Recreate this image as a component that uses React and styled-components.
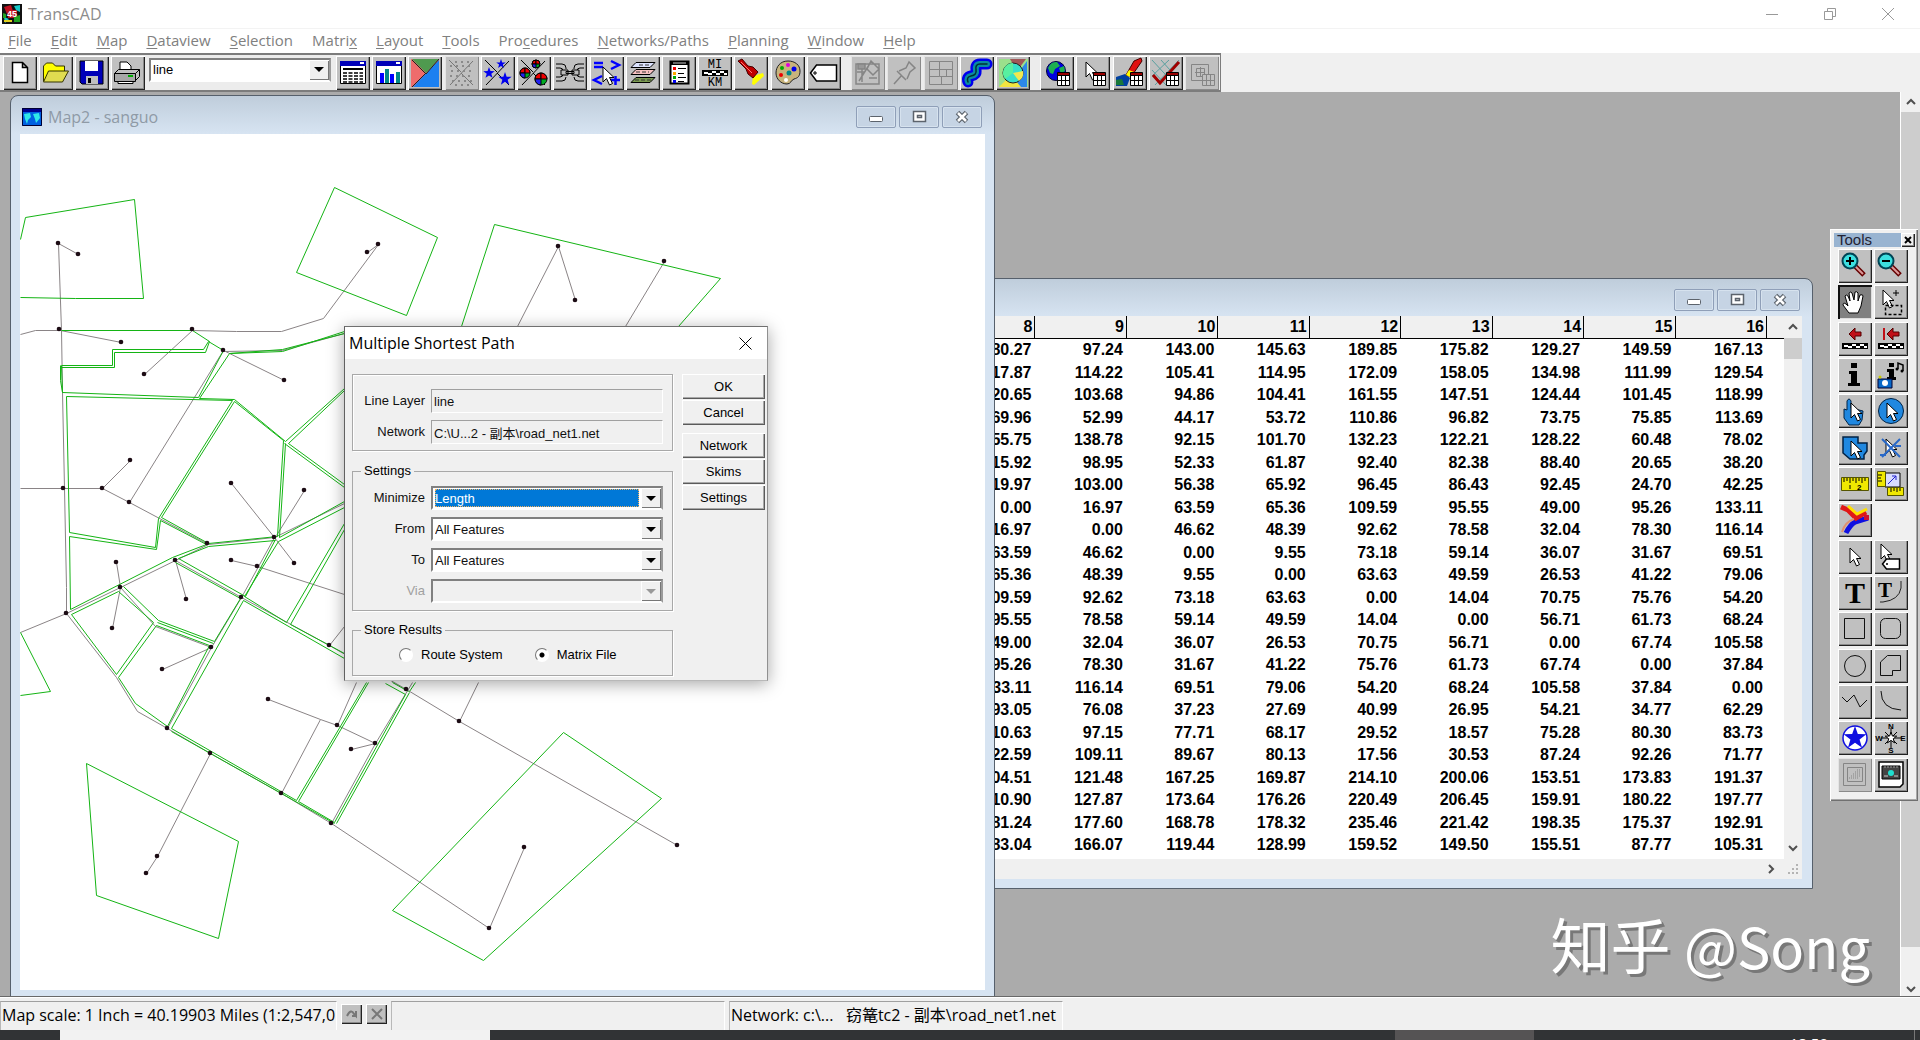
import React from "react";
import styled, { createGlobalStyle, css } from "styled-components";

const UI = '"Open Sans", "Noto Sans CJK SC", sans-serif';
const CLASSIC = '"Liberation Sans", "Noto Sans CJK SC", sans-serif';

const GlobalStyle = createGlobalStyle`
  * { box-sizing: border-box; }
  body { margin: 0; overflow: hidden; font-family: ${UI}; color: #000; }
  button, input, select { font: inherit; color: inherit; margin: 0; border-radius: 0; }
`;

/* ---------- icons, drawn on the 34px face of a tool button ---------- */

const MiniTable = ({ off }) => (
  <g stroke={off ? "#858585" : "#000"} fill={off ? "#c0c0c0" : "#fff"}>
    <path d="M17.5 18.5h12v11h-12z" />
    {!off && <path d="M17.5 16.5h12v3h-12z" fill="#900" />}
    <path d="M17.5 24.5h12M21.5 19v10M25.5 19v10" />
  </g>
);
const Cursor = ({ x = 0, y = 0 }) => (
  <path transform={`translate(${x} ${y})`} d="M0 0v15l3.500-3.500 3 6.500 3-1.500-3-6h4.500z" fill="#fff" stroke="#000" />
);
const star = (cx, cy, r) =>
  Array.from({ length: 10 }, (_, i) => {
    const a = (Math.PI * i) / 5 - Math.PI / 2;
    const k = i % 2 ? r * 0.4 : r;
    return `${cx + k * Math.cos(a)},${cy + k * Math.sin(a)}`;
  }).join(" ");
const Pie = ({ x, y, r }) => (
  <g stroke="#000">
    <circle cx={x} cy={y} r={r} fill="#0a2" />
    <path d={`M${x} ${y}V${y - r}A${r} ${r} 0 0 0 ${x - r} ${y}z`} fill="#e00" />
    <path d={`M${x} ${y}H${x - r}A${r} ${r} 0 0 0 ${x} ${y + r}z`} fill="#22e" />
    <path d={`M${x} ${y}H${x + r}A${r} ${r} 0 0 0 ${x} ${y - r}z`} fill="#e00" />
  </g>
);
const Diagonals = ({ c = "#000" }) => <path d="M4 4l12 12M28 5L5 29M16 17l12 12" stroke={c} fill="none" />;
const Scale = ({ y }) => (
  <g>
    <path d={`M4 ${y}h26v6H4z`} fill="#000" />
    <path d={`M6 ${y + 2}h4v2H6zM14 ${y + 1}h4v2h-4zM10 ${y + 3}h4v2h-4zM22 ${y + 1}h4v2h-4zM18 ${y + 3}h4v2h-4zM26 ${y + 3}h3v2h-3z`} fill="#fff" />
  </g>
);
const Lens = ({ plus }) => (
  <g>
    <path d="M17 17l9 9" stroke="#600" strokeWidth="5" />
    <path d="M17 17l8 8" stroke="#d99" strokeWidth="2" />
    <circle cx="12" cy="12" r="7.500" fill="#3de0e0" stroke="#045" strokeWidth="2" />
    <path d={plus ? "M8 12h8M12 8v8" : "M8 12h8"} stroke="#000" strokeWidth="2" />
  </g>
);

const icons = {
  newFile: <path d="M9.500 6.500h10l5 5v15h-15zM19.500 6.500v5h5" fill="#fff" stroke="#000" strokeWidth="1.500" />,
  open: (
    <g stroke="#330">
      <path d="M4.500 25V10l3-3h6l3 3h9v6" fill="#ff0" />
      <path d="M4.500 26l5-11h20l-6 11z" fill="#e0dc50" />
    </g>
  ),
  save: (
    <g>
      <path d="M5 5h23v23H7l-2-2z" fill="#0000b8" stroke="#000" />
      <path d="M10 5h13v10H10z" fill="#fff" />
      <path d="M11 20h12v8H11z" fill="#c0c0c0" />
      <path d="M13 22h3v5h-3z" fill="#000" />
    </g>
  ),
  print: (
    <g stroke="#000">
      <path d="M9 14V6h7l4 4v5" fill="#fff" />
      <path d="M3.500 17.500l4-4h21v7l-4 4h-21z" fill="#c0c0c0" />
      <path d="M3.500 17.500h21v8h-21zM24.500 17.500l4-4" fill="#a8a8a8" />
      <path d="M7 25.500h15v2H7z" fill="#fff" />
      <path d="M17 20h5" stroke="#0a0" strokeWidth="2" />
    </g>
  ),
  table: (
    <g>
      <path d="M4.500 5.500h25v22h-25z" fill="#fff" stroke="#000" />
      <path d="M4 5h26v5H4z" fill="#0000b8" />
      <path d="M24 7h4" stroke="#fff" strokeWidth="2" />
      <path d="M7 13h20" stroke="#000" strokeWidth="2" />
      <path d="M7 17h20M7 20h20M7 23h20M7 26h20" stroke="#000" strokeWidth="1.500" strokeDasharray="4 1.500" />
    </g>
  ),
  chart: (
    <g>
      <path d="M4.500 5.500h25v22h-25z" fill="#fff" stroke="#000" />
      <path d="M4 5h26v5H4z" fill="#0000b8" />
      <path d="M24 7h4" stroke="#fff" strokeWidth="2" />
      <path d="M8 17h4v10H8zM18 18h4v9h-4z" fill="#00f" />
      <path d="M13 13h4v14h-4zM24 16h4v11h-4z" fill="#088" />
    </g>
  ),
  theme: (
    <g>
      <path d="M3 3h28v28H3z" fill="#ee6c6c" />
      <path d="M4 3h27L18 17z" fill="#4f9a4f" />
      <path d="M31 4v27H5z" fill="#1c80f0" />
      <path d="M4 4l14 14L31 3M18 17L4 31" stroke="#222" fill="none" />
    </g>
  ),
  dots: (
    <g>
      <Diagonals c="#777" />
      <path d="M5 10h24M6 15h24M5 20h24M7 25h22M10 6h14M10 29h14" stroke="#8a8a8a" strokeWidth="2" strokeDasharray="2 4" />
    </g>
  ),
  stars: (
    <g>
      <Diagonals />
      <g fill="#00e">
        <polygon points={star(20, 8, 5)} />
        <polygon points={star(8, 17, 6)} />
        <polygon points={star(24, 23, 7)} />
      </g>
    </g>
  ),
  pies: (
    <g>
      <Diagonals />
      <Pie x={19} y={8} r={4} />
      <Pie x={8} y={17} r={5} />
      <Pie x={24} y={23} r={6} />
    </g>
  ),
  chain: (
    <g fill="none" stroke="#000">
      <path d="M3 8h6q4 0 4 4v1M3 12h4q3 0 3 3M3 25h6q4 0 4-4M3 21h4q3 0 3-3" />
      <path d="M31 8h-6q-4 0-4 4v1M31 12h-4q-3 0-3 3M31 25h-6q-4 0-4-4M31 21h-4q-3 0-3-3" />
      <path d="M8 14h7v5H8zM19 14h7v5h-7zM13 15.500h8v2h-8z" fill="#bbb" />
    </g>
  ),
  query: (
    <g>
      <path d="M4 7h9M4 11h9M21 5l8 4-8 4M12 20l-8 4 8 4M21 24h9M25.500 20v9" stroke="#00f" strokeWidth="2.500" fill="none" />
      <Cursor x={13} y={11} />
    </g>
  ),
  layers: (
    <g stroke="#000">
      <path d="M10 6.500h19l-5 5H5z" fill="#dde4ff" />
      <path d="M10 13.500h19l-5 5H5z" fill="#f7c0c0" />
      <path d="M10 21.500h19l-5 5H5z" fill="#7a9a50" />
      <path d="M13 9h11M10 16h13M9 24h16" stroke="#333" strokeDasharray="4 2" />
    </g>
  ),
  legend: (
    <g>
      <path d="M8.500 5.500h18v22h-18z" fill="#fff" stroke="#000" strokeWidth="2" />
      <path d="M8 5h19v4H8z" fill="#000" />
      <path d="M11 7h13" stroke="#ccc" />
      <path d="M11 11h3v3h-3z" fill="#e00" />
      <path d="M11 16h3v3h-3z" fill="#fa0" />
      <path d="M11 20h3v3h-3z" fill="#0a0" />
      <path d="M11 24h3v3h-3z" fill="#00e" />
      <path d="M16 12.500h8M16 17.500h6M16 21.500h8M16 25.500h6" stroke="#000" />
    </g>
  ),
  units: (
    <g>
      <Scale y={14} />
      <g fontFamily="Liberation Mono, monospace" fontSize="12" textAnchor="middle">
        <text x="17" y="12">MI</text>
        <text x="17" y="30">KM</text>
      </g>
    </g>
  ),
  flashlight: (
    <g>
      <path d="M19 20l10-3 1 3-10 9-2-1z" fill="#ff0" />
      <path d="M4 5l4-2 6 7 5 1 5 5-5 6-5-4-2-5z" fill="#c00000" stroke="#400" />
      <path d="M7 6l11 11" stroke="#f77" />
    </g>
  ),
  palette: (
    <g>
      <path d="M17 5C9 5 5 11 5 17s5 11 11 11c4 0 4-4 7-5 4-1 6-3 6-8 0-6-5-10-12-10z" fill="#c8b47c" stroke="#222" />
      <circle cx="11" cy="12" r="2" fill="#0a0" />
      <circle cx="17" cy="9" r="2" fill="#d0d" />
      <circle cx="23" cy="13" r="2.500" fill="#00e" />
      <circle cx="10" cy="19" r="2" fill="#e00" />
      <circle cx="18" cy="17" r="2.500" fill="#088" />
      <circle cx="15" cy="24" r="2" fill="#fff" />
    </g>
  ),
  tag: (
    <g stroke="#000">
      <path d="M3.500 17l6-8h20v16h-20z" fill="#fff" strokeWidth="1.500" />
      <path d="M6 17h4M8 15v4" />
    </g>
  ),
  pinMap: (
    <g fill="none" stroke="#858585" strokeWidth="1.500">
      <path d="M5 8h23v20H5zM8 25l10-16M20 5l8 8-6 6-6-6zM6 16h8M18 22h8M11 12v14" />
      <path d="M7 8h7v5H7z" fill="#999" />
    </g>
  ),
  pin: <path d="M7 28l8-9M10 15l9 9M12 15l7-3 3-6 6 6-5 4-3 7" fill="none" stroke="#858585" strokeWidth="1.500" />,
  grid: <path d="M5.500 5.500h23v23h-23zM5.500 13.500h10M15.500 5.500v15h-10M15.500 13.500h13M22.500 13.500v7M15.500 20.500h13M17.500 20.500v8" fill="none" stroke="#858585" />,
  river: (
    <g fill="none" strokeLinejoin="round" strokeLinecap="round">
      <path d="M27 8h-7q-5 0-4 6 1 5-5 6-5 1-3 6" stroke="#0000ee" strokeWidth="11" />
      <path d="M27 8h-7q-5 0-4 6 1 5-5 6-5 1-3 6" stroke="#0a8ca0" strokeWidth="6" />
      <path d="M27 8h-7q-5 0-4 6 1 5-5 6-5 1-3 6" stroke="#033" strokeWidth="1.500" />
    </g>
  ),
  pieMap: (
    <g>
      <path d="M3 3h29v28H3z" fill="#9be08c" />
      <path d="M14 3h16l-9 12z" fill="#a05858" />
      <path d="M31 5v26H12z" fill="#2c88e8" />
      <path d="M3 31l12-12 10 12z" fill="#f2e640" />
      <circle cx="17" cy="17" r="10" fill="#38e0c8" stroke="#222" />
      <path d="M17 17V7a10 10 0 0 0-8 16z" fill="#58f0a0" />
      <path d="M17 17l6 8a10 10 0 0 0 4-10z" fill="#f0e850" />
    </g>
  ),
  globeTable: (
    <g>
      <circle cx="16" cy="15" r="9.500" fill="#0000e0" stroke="#003" />
      <path d="M8 12q3-7 9-6l3 4-5 3-2 5-3-1zM19 12l5-2 1 5-4 3z" fill="#1cb050" />
      <MiniTable />
    </g>
  ),
  cursorTable: (
    <g>
      <Cursor x={10} y={6} />
      <MiniTable />
    </g>
  ),
  brushTable: (
    <g>
      <path d="M3 21l9-3 5 4-3 8H3z" fill="#0040a0" />
      <path d="M3 24l6-1 2 6H3z" fill="#187838" />
      <path d="M13 19l8-14 7-3 1 3-11 16z" fill="#e01010" stroke="#400" />
      <path d="M16 14l5 2-4 5-4-2z" fill="#ff0" />
      <MiniTable />
    </g>
  ),
  checkTable: (
    <g>
      <path d="M3 4l24 26M12 4l18 20M3 14l14 15M30 4L6 29M20 4L3 20" stroke="#5aa0a0" fill="none" />
      <path d="M4 19l7 8L30 6" stroke="#a00000" strokeWidth="3" fill="none" />
      <MiniTable />
    </g>
  ),
  offTable: (
    <g>
      <path d="M6.500 8.500h17v16h-17zM10 16.500h10M15.500 11v10M11.500 12.500h8v8h-8z" fill="none" stroke="#858585" />
      <MiniTable off />
    </g>
  ),
  zoomIn: <Lens plus />,
  zoomOut: <Lens />,
  hand: <path d="M11 28l-6-8q0-3 3-1l2 2-3-10q1-2 3 0l2 5-1-8q2-2 3 0l2 7 1-8q2-1 3 1v8l2-6q3-1 3 1l-2 10-3 7z" fill="#fff" stroke="#000" />,
  selectBox: (
    <g>
      <Cursor x={9} y={5} />
      <path d="M11.500 20.500h16v9h-16z" fill="none" stroke="#000" strokeWidth="1.500" strokeDasharray="3 2" />
      <path d="M19 8h6M22 5v6" stroke="#000" />
    </g>
  ),
  back: (
    <g>
      <path d="M11 12l6-6v4h6v4h-6v4z" fill="#c01018" stroke="#500" />
      <Scale y={21} />
    </g>
  ),
  backEnd: (
    <g>
      <path d="M13 12l6-6v4h6v4h-6v4z" fill="#c01018" stroke="#500" />
      <path d="M10 6v12" stroke="#c01018" strokeWidth="2" />
      <Scale y={21} />
    </g>
  ),
  info: <path d="M13 5h6v5h-6zM11 13h8v12h3v3H10v-3h3v-9h-2z" fill="#000" />,
  infoMedia: (
    <g>
      <path d="M15 5h5v4h-5zM13 11h7v8h2v3h-9v-3h2v-5h-2z" fill="#000" />
      <path d="M24 11V5l5 2v6" stroke="#000" fill="none" strokeWidth="1.500" />
      <circle cx="23" cy="11" r="1.500" /><circle cx="28" cy="13" r="1.500" />
      <path d="M4 21h14v9H4z" fill="#0868c8" stroke="#003" />
      <circle cx="11" cy="25" r="3" fill="#fff" /><circle cx="6" cy="19" r="1.500" fill="#cc0" />
    </g>
  ),
  pointSel: (
    <g>
      <path d="M9 7q2-4 4 0v7l8 2 4 1-1 9-3 5H11l-5-7V15l3 1z" fill="#2088e0" stroke="#024" />
      <Cursor x={13} y={9} />
    </g>
  ),
  circleSel: (
    <g>
      <circle cx="17" cy="17" r="12.500" fill="#2088e0" stroke="#024" />
      <Cursor x={13} y={9} />
    </g>
  ),
  polySel: (
    <g>
      <path d="M5 6h15v6h9v8l-3 4v4H12l-7-6z" fill="#2088e0" stroke="#024" strokeWidth="1.500" />
      <Cursor x={13} y={10} />
    </g>
  ),
  clearSel: (
    <g>
      <Cursor x={12} y={8} />
      <path d="M8 8l18 18M26 8L8 26M6 24h6M21 15h6" stroke="#2868c8" strokeWidth="2" />
    </g>
  ),
  ruler: (
    <g>
      <path d="M3.500 10.500h27v13h-27z" fill="#f0e800" stroke="#550" />
      <path d="M6 11v4M9 11v3M12 11v5M15 11v3M18 11v5M21 11v3M24 11v5M27 11v3M12 18v4" stroke="#000" />
      <text x="19" y="23" fontFamily="Liberation Sans, sans-serif" fontSize="8" fontWeight="700">2</text>
    </g>
  ),
  rulers: (
    <g>
      <path d="M11 6h15v14H11z" fill="#d8dcff" stroke="#000" />
      <path d="M14 17l8-8m0 4V9h-4" stroke="#22c" fill="none" />
      <path d="M3.500 4.500h8v15h-8zM13.500 20.500h16v8h-16z" fill="#f0e800" stroke="#550" />
      <path d="M4 8h4M4 11h3M4 14h4M17 21v4M20 21v3M23 21v4M26 21v3" stroke="#000" />
    </g>
  ),
  route: (
    <g fill="none">
      <path d="M8 30q4-8 9-11l13-4" stroke="#1010e0" strokeWidth="5" />
      <path d="M3 4l7 3 8 8 10-6" stroke="#e01818" strokeWidth="5" />
      <path d="M10 3l9 8 10-5" stroke="#ffe000" strokeWidth="3" />
      <path d="M4 29q3-10 12-13" stroke="#e09070" strokeWidth="2" />
      <path d="M26 12h5v5h-5z" fill="#d01030" />
    </g>
  ),
  pointer: <Cursor x={12} y={8} />,
  tagPointer: (
    <g>
      <Cursor x={7} y={4} />
      <path d="M8.500 24l4-5h13v10h-13z" fill="#fff" stroke="#000" strokeWidth="1.500" />
      <circle cx="13" cy="24" r="1" />
    </g>
  ),
  text: <text x="17" y="27" textAnchor="middle" fontFamily="Liberation Serif, serif" fontWeight="700" fontSize="30">T</text>,
  curveText: (
    <g>
      <text x="11" y="21" textAnchor="middle" fontFamily="Liberation Serif, serif" fontWeight="700" fontSize="21">T</text>
      <path d="M27 5v7Q25 24 9 26H6" fill="none" stroke="#222" />
    </g>
  ),
  rect: <path d="M6.500 6.500h20v20h-20z" fill="none" stroke="#111" />,
  roundRect: <rect x="6.500" y="6.500" width="20" height="20" rx="5" fill="none" stroke="#111" />,
  circle: <circle cx="17" cy="17" r="10.500" fill="none" stroke="#111" />,
  polygon: <path d="M6.500 13l7-6.500h13v15h-8v5h-12z" fill="none" stroke="#111" />,
  zigzag: <path d="M4 12l5 5 7-7 6 12 7-7" fill="none" stroke="#111" />,
  arc: <path d="M7 6q0 18 20 19" fill="none" stroke="#111" />,
  badge: (
    <g>
      <circle cx="17" cy="17" r="12" fill="#fff" stroke="#1010e0" strokeWidth="1.500" />
      <polygon points={star(17, 17, 12)} fill="#1010e0" />
    </g>
  ),
  compass: (
    <g>
      <path d="M17 7v20M7 17h20M11 11l12 12M23 11L11 23" stroke="#000" />
      <polygon points={star(17, 17, 6)} fill="#fff" stroke="#000" />
      <g fontFamily="Liberation Sans, sans-serif" fontSize="8" fontWeight="700" textAnchor="middle">
        <text x="17" y="8">N</text><text x="17" y="32">S</text><text x="5" y="20">W</text><text x="29" y="20">E</text>
      </g>
    </g>
  ),
  frame: (
    <g fill="none" stroke="#858585">
      <path d="M5.500 5.500h22v22h-22zM9.500 9.500h15v14h-15z" />
      <path d="M11 20h10M13 18h10M15 16h8M17 14h6M19 12h4" strokeDasharray="1 1" />
    </g>
  ),
  layout: (
    <g>
      <path d="M5 4h24v22l-3 3H5z" fill="#fff" stroke="#000" strokeWidth="1.500" />
      <path d="M8 8h18v13H8z" fill="#444" stroke="#000" />
      <path d="M10 9h14" stroke="#999" strokeDasharray="2 1" />
      <circle cx="17" cy="15" r="3" fill="#20e0d0" />
      <path d="M10 18h4M20 18h4" stroke="#ccc" />
    </g>
  ),
};

const Glyph = ({ name }) => (
  <svg width="34" height="34" viewBox="0 0 34 34" fill="#000" aria-hidden="true">{icons[name]}</svg>
);

/* ---------- application frame ---------- */

const Screen = styled.div`
  height: 100vh;
  display: flex;
  flex-direction: column;
  background: #f0f0f0;
`;
const TitleBar = styled.header`
  flex: 0 0 29px;
  display: flex;
  align-items: center;
  gap: 6px;
  padding: 0 6px 0 2px;
  background: #fff;
  border-bottom: 1px solid #f3f3f3;
  color: #8c8c8c;
  font-size: 16px;
`;
const Grow = styled.span`flex: 1;`;
const CaptionButton = styled.button`
  width: 52px;
  height: 28px;
  display: grid;
  place-items: center;
  border: 0;
  background: none;
`;
const MenuBar = styled.nav`
  flex: 0 0 24px;
  display: flex;
  gap: 19px;
  padding-left: 8px;
  background: #fff;
  font-size: 15px;
  line-height: 23px;
`;
const MenuLink = styled.a`
  color: #808080;
  text-decoration: none;
  u { text-underline-offset: 2px; }
`;
const ToolBar = styled.div`
  flex: 0 0 39px;
  align-self: flex-start;
  display: flex;
  align-items: center;
  gap: 10px;
  padding: 0 1px 0 3px;
  border: solid #7c7c7c;
  border-width: 2px 1px 2px 0;
  background: #ececec;
`;
const ToolGroup = styled.div`
  display: flex;
  justify-content: space-between;
  width: ${(p) => p.$w}px;
`;
const raised = css`box-shadow: inset 1px 1px #fff, inset -1px -1px #222, inset -2px -2px #8a8a8a;`;
const ToolButton = styled.button`
  width: 34px;
  height: 34px;
  padding: 0;
  border: 0;
  display: block;
  background: ${(p) => (p.$pressed ? "#808080" : "#c0c0c0")};
  ${(p) => (p.$pressed ? css`box-shadow: inset 2px 2px #111, inset -1px -1px #ddd;` : raised)}
  ${(p) => p.disabled && css`box-shadow: inset 1px 1px #e4e4e4, inset -1px -1px #8a8a8a;`}
  svg { display: block; }
`;
const ComboWrap = styled.div`
  margin: -6px -5px 0 -6px;
`;
const Desktop = styled.main`
  position: relative;
  flex: 1;
  min-height: 0;
  display: flex;
  justify-content: flex-end;
  background: #ababab;
  border-bottom: 1px solid #696969;
  overflow: hidden;
`;

/* ---------- combos ---------- */

const ComboBox = styled.div`
  position: relative;
  display: flex;
  width: ${(p) => p.$w || "100%"};
  height: 24px;
  border: 2px solid;
  border-color: #808080 #9a9a9a #fff #808080;
  background: ${(p) => (p.$off ? "#f0f0f0" : "#fff")};
  font: 13px ${CLASSIC};
`;
const Picker = styled.select`
  flex: 1;
  min-width: 0;
  appearance: none;
  border: 0;
  padding: 0 22px 0 2px;
  background: transparent;
  outline: none;
  opacity: 1;
  ${(p) => p.$active && css`
    margin: 1px 22px 1px 2px;
    padding: 0;
    background: #0078d7;
    color: #fff;
    outline: 1px dotted #f0b060;
    outline-offset: -1px;
  `}
`;
const DropArrow = styled.span`
  position: absolute;
  right: 0;
  top: 0;
  width: 20px;
  height: 20px;
  display: grid;
  place-items: center;
  background: #f0f0f0;
  box-shadow: inset 1px 1px #fff, inset -1px -1px #777;
  pointer-events: none;
  &::after {
    content: "";
    border: 5px solid transparent;
    border-top-color: ${(p) => (p.$off ? "#999" : "#000")};
    border-bottom: 0;
  }
`;
const Combo = ({ id, label, value, w, off, active }) => (
  <ComboBox $w={w} $off={off}>
    <Picker id={id} aria-label={label} disabled={off} $active={active} defaultValue={value}>
      <option>{value}</option>
    </Picker>
    <DropArrow $off={off} />
  </ComboBox>
);

/* ---------- child windows ---------- */

const Child = styled.section`
  position: absolute;
  left: ${(p) => p.$x}px;
  top: ${(p) => p.$y}px;
  width: ${(p) => p.$w}px;
  height: ${(p) => p.$h}px;
  display: flex;
  flex-direction: column;
  padding: 0 9px ${(p) => p.$foot}px;
  border: 1px solid #56606c;
  border-radius: 8px 8px 0 0;
  background: linear-gradient(#bfcddb, #d7e4f2 38px);
`;
const ChildBar = styled.header`
  flex: 0 0 ${(p) => p.$h}px;
  display: flex;
  align-items: center;
  gap: 3px;
  padding: 4px 3px 0 2px;
  color: #8f9aa6;
  font-size: 16px;
  svg { margin-right: 3px; }
`;
const ChildButton = styled.button`
  width: 40px;
  height: 22px;
  padding: 0;
  display: grid;
  place-items: center;
  border: 1px solid #8f9fb8;
  border-radius: 2px;
  background: #c6d4e4;
  box-shadow: inset 0 0 0 1px #d6e2ee;
  svg { margin: 0; }
`;
const ChildButtons = () => (
  <>
    <ChildButton aria-label="Minimize">
      <svg width="16" height="14"><rect x="1.500" y="6.500" width="13" height="5" rx="1" fill="#fff" stroke="#5c636c" /></svg>
    </ChildButton>
    <ChildButton aria-label="Restore">
      <svg width="16" height="14"><path d="M2.500 1.500h12v10h-12zM6.500 5.500h4v2h-4z" fill="#fff" stroke="#5c636c" strokeWidth="1.500" /></svg>
    </ChildButton>
    <ChildButton aria-label="Close">
      <svg width="16" height="14" fill="none"><path d="M3.500 2.500l9 9M12.500 2.500l-9 9" stroke="#5c636c" strokeWidth="5" /><path d="M4 3l8 8M12 3l-8 8" stroke="#fff" strokeWidth="2.500" /></svg>
    </ChildButton>
  </>
);
const Canvas = styled.div`
  flex: 1;
  min-height: 0;
  background: #fff;
  overflow: hidden;
  svg { display: block; }
`;

/* ---------- map ---------- */

const zones = [
  "20,239 25,217 134,199 143,298 75,298 20,297",
  "334,187 296,272 406,315 437,237 334,187",
  "461,326 494,224 720,278 678,326",
  "20,632 50,691 20,695",
  "86,763 238,841 218,938 96,895 86,763",
  "563,732 661,798 483,960 392,910 563,732",
  "61,330 192,330 209,341 205,352 114,352 114,367 60,367",
  "223,350 208,341 203,349 112,349 112,365 61,365 62,392 198,397 223,350",
  "60,365 60,380 62,392",
  "66,396 232,400 158,518 155,547 69,532 66,396",
  "234,401 283,440 277,536 208,543 161,517 234,401",
  "344,388 285,441 234,399 199,398 229,353 282,351 344,331",
  "344,390 288,443 344,484",
  "284,443 344,487",
  "344,501 279,537 285,443",
  "344,333 282,349 229,353",
  "278,541 344,507",
  "344,523 286,622 244,596 278,541",
  "344,529 290,624 344,653",
  "275,539 245,596 178,558 208,546 275,540",
  "69,536 156,549 160,520 206,544 172,557 70,609 69,536",
  "71,614 118,591 153,622 116,674 71,614",
  "123,586 158,620 214,641 240,598 175,562",
  "157,622 213,643",
  "156,625 209,645 167,726 135,703 118,677 156,625",
  "344,658 243,600 171,728 296,800 366,682",
  "368,682 298,801 334,822 405,694 385,683",
  "392,682 408,691",
  "409,691 415,682",
  "409,692 336,823",
  "171,731 334,823",
];
const roads = [
  "78,254 58,243 61,330 62,392 64,488 66,587 66,613",
  "20,334 35,330 60,330 121,342",
  "144,374 192,330 236,331 281,331 323,318 378,244 367,252",
  "284,380 223,350 129,502",
  "223,351 282,350 344,333",
  "20,488 102,488 129,502 208,544 274,537 344,503",
  "102,488 130,460",
  "231,483 274,537 294,563",
  "304,490 276,535",
  "231,560 257,566 344,594",
  "274,537 241,597 211,647 167,728",
  "186,599 175,560 241,597 329,645 406,689 459,721 677,845",
  "208,544 175,560 120,587 66,613 20,632",
  "116,562 120,587 112,628",
  "120,587 155,626 211,647 162,669",
  "66,613 116,677 137,711 167,728 210,753 281,793 331,823 489,928 524,847",
  "210,753 157,856 146,873",
  "268,699 320,719 337,725 375,743 351,749",
  "320,719 281,793",
  "337,725 356,682",
  "331,823 375,743 412,682",
  "459,721 478,682",
  "329,645 344,626",
  "575,300 558,246 517,326",
  "664,261 625,326",
];
const nodes =
  "58,243 78,254 59,329 121,342 192,329 144,374 223,350 284,380 378,244 367,252 130,460 102,488 63,488 129,502 231,483 304,490 207,543 274,537 294,563 231,560 257,566 175,560 116,562 120,587 66,613 112,628 186,599 241,597 211,647 162,669 329,645 167,728 210,753 268,699 281,793 331,823 337,725 375,743 351,749 157,856 146,873 406,689 459,721 677,845 524,847 489,928 558,246 575,300 664,261".split(" ");

const MapDrawing = () => (
  <svg width="965" height="856" viewBox="20 134 965 856" role="img" aria-label="Map of zones and road network">
    <g transform="translate(0.5 0.5)" fill="none" strokeWidth="1">
      {roads.map((r) => <polyline key={r} points={r} stroke="#8a8486" />)}
      {zones.map((z) => <polyline key={z} points={z} stroke="#14b414" />)}
    </g>
    {nodes.map((n) => {
      const [x, y] = n.split(",");
      return <circle key={n} cx={x} cy={y} r="2.300" fill="#1c0c14" />;
    })}
  </svg>
);

/* ---------- matrix ---------- */

const matrix = `80.27 97.24 143.00 145.63 189.85 175.82 129.27 149.59 167.13
17.87 114.22 105.41 114.95 172.09 158.05 134.98 111.99 129.54
20.65 103.68 94.86 104.41 161.55 147.51 124.44 101.45 118.99
69.96 52.99 44.17 53.72 110.86 96.82 73.75 75.85 113.69
55.75 138.78 92.15 101.70 132.23 122.21 128.22 60.48 78.02
15.92 98.95 52.33 61.87 92.40 82.38 88.40 20.65 38.20
19.97 103.00 56.38 65.92 96.45 86.43 92.45 24.70 42.25
0.00 16.97 63.59 65.36 109.59 95.55 49.00 95.26 133.11
16.97 0.00 46.62 48.39 92.62 78.58 32.04 78.30 116.14
63.59 46.62 0.00 9.55 73.18 59.14 36.07 31.67 69.51
65.36 48.39 9.55 0.00 63.63 49.59 26.53 41.22 79.06
09.59 92.62 73.18 63.63 0.00 14.04 70.75 75.76 54.20
95.55 78.58 59.14 49.59 14.04 0.00 56.71 61.73 68.24
49.00 32.04 36.07 26.53 70.75 56.71 0.00 67.74 105.58
95.26 78.30 31.67 41.22 75.76 61.73 67.74 0.00 37.84
33.11 116.14 69.51 79.06 54.20 68.24 105.58 37.84 0.00
93.05 76.08 37.23 27.69 40.99 26.95 54.21 34.77 62.29
10.63 97.15 77.71 68.17 29.52 18.57 75.28 80.30 83.73
22.59 109.11 89.67 80.13 17.56 30.53 87.24 92.26 71.77
04.51 121.48 167.25 169.87 214.10 200.06 153.51 173.83 191.37
10.90 127.87 173.64 176.26 220.49 206.45 159.91 180.22 197.77
81.24 177.60 168.78 178.32 235.46 221.42 198.35 175.37 192.91
83.04 166.07 119.44 128.99 159.52 149.50 155.51 87.77 105.31`
  .split("\n")
  .map((line) => line.split(" "));
const columns = [8, 9, 10, 11, 12, 13, 14, 15, 16];

const Sheet = styled.div`
  flex: 1;
  min-height: 0;
  display: grid;
  grid-template-columns: 1fr 18px;
  grid-template-rows: 1fr 20px;
  margin-right: 1px;
  background: #fff;
`;
const Table = styled.table`
  width: 100%;
  align-self: start;
  table-layout: fixed;
  border-collapse: separate;
  border-spacing: 0;
  font: bold 16px/20px ${CLASSIC};
  text-align: right;
  th, td { padding: 0 4px 0 0; overflow: hidden; }
  th { height: 23px; background: #f0f0f0; border-bottom: 1px solid #000; border-right: 1px solid #000; padding-right: 2px; }
  th:last-child { border-right: 0; width: 17px; }
  tbody tr { height: 22px; }
  tbody tr:nth-child(even) { height: 23px; }
`;
const Track = styled.div`
  display: flex;
  flex-direction: ${(p) => (p.$row ? "row" : "column")};
  align-items: center;
  justify-content: ${(p) => (p.$row ? "flex-end" : "flex-start")};
  padding-right: ${(p) => (p.$row ? 3 : 0)}px;
  background: #f0f0f0;
`;
const ScrollButton = styled.button`
  flex: 0 0 ${(p) => p.$s || 20}px;
  width: 18px;
  padding: 0;
  border: 0;
  background: #f0f0f0;
  display: grid;
  place-items: center;
`;
const Thumb = styled.span`
  flex: ${(p) => (p.$h ? `0 0 ${p.$h}px` : "1")};
  width: 100%;
  background: #cdcdcd;
`;
const DesktopScroll = styled.div`
  width: 20px;
  display: flex;
  flex-direction: column;
  align-items: center;
  border-left: 1px solid #fff;
  background: #f0f0f0;
`;
const BottomArrow = styled.div`
  height: 49px;
  display: flex;
  align-items: flex-end;
  padding-bottom: 1px;
`;
const turns = { up: 0, right: 90, down: 180 };
const Chevron = ({ to }) => (
  <svg width="12" height="12" viewBox="0 0 12 12"><path transform={`rotate(${turns[to]} 6 6)`} d="M2 8l4-4 4 4" fill="none" stroke="#505050" strokeWidth="2" /></svg>
);
const Grip = styled.svg`display: block; margin: 4px 2px;`;

/* ---------- tools palette ---------- */

const Palette = styled.aside`
  position: absolute;
  right: 2px;
  top: 137px;
  width: 88px;
  padding: 4px 3px 9px 4px;
  background: #f0f0f0;
  box-shadow: inset 1px 1px #fff, inset -1px -1px #707070, inset -2px -2px #a8a8a8;
`;
const PaletteBar = styled.header`
  display: flex;
  justify-content: space-between;
  height: 14px;
  padding-left: 3px;
  background: #99b4d1;
  font: 15px/14px ${CLASSIC};
  color: #223;
`;
const PaletteClose = styled.button`
  width: 14px;
  height: 14px;
  padding: 0;
  border: 0;
  display: grid;
  place-items: center;
  background: #f0f0f0;
  ${raised}
`;
const PaletteGrid = styled.div`
  display: grid;
  grid-template-columns: 34px 34px;
  column-gap: 2px;
  align-content: space-between;
  height: 543px;
  margin: 2px 0 0 4px;
`;
const tools = [
  ["zoomIn", "Zoom in"], ["zoomOut", "Zoom out"], ["hand", "Pan"], ["selectBox", "Select by box"],
  ["back", "Previous scale"], ["backEnd", "Initial scale"], ["info", "Info"], ["infoMedia", "Media info"],
  ["pointSel", "Select by pointing"], ["circleSel", "Select by circle"], ["polySel", "Select by shape"], ["clearSel", "Clear selection"],
  ["ruler", "Measure"], ["rulers", "Map ruler"], ["route", "Shortest path"], null,
  ["pointer", "Pointer"], ["tagPointer", "Label pointer"], ["text", "Text"], ["curveText", "Curved text"],
  ["rect", "Rectangle"], ["roundRect", "Rounded rectangle"], ["circle", "Circle"], ["polygon", "Polygon"],
  ["zigzag", "Line"], ["arc", "Arc"], ["badge", "Symbol"], ["compass", "North arrow"],
  ["frame", "Frame"], ["layout", "Layout"],
];

/* ---------- dialog ---------- */

const Dialog = styled.form`
  position: absolute;
  left: 344px;
  top: 234px;
  width: 424px;
  border: 1px solid #707070;
  border-color: #707070 #909090 #b8b8b8 #606060;
  background: #f0f0f0;
  box-shadow: 0 3px 16px rgba(0, 0, 0, 0.35);
  font: 13px/16px ${CLASSIC};
`;
const DialogBar = styled.header`
  display: flex;
  align-items: center;
  justify-content: space-between;
  height: 32px;
  padding: 0 15px 0 4px;
  background: #fff;
  font: 16px/30px ${UI};
`;
const DialogClose = styled.button`
  padding: 0;
  border: 0;
  background: none;
  svg { display: block; }
`;
const DialogBody = styled.div`
  display: flex;
  gap: 9px;
  padding: 15px 2px 4px 7px;
`;
const Groups = styled.div`
  flex: 1;
  display: flex;
  flex-direction: column;
`;
const Group = styled.fieldset`
  min-width: 0;
  margin: 0 0 ${(p) => p.$after || 0}px;
  padding: ${(p) => p.$pad};
  border: 1px solid #a8a8a8;
  box-shadow: 1px 1px #fff, inset 1px 1px ${(p) => (p.$plain ? "#fff" : "transparent")};
`;
const Legend = styled.legend`
  margin-left: 8px;
  padding: 0 3px;
`;
const Field = styled.div`
  display: grid;
  grid-template-columns: 72px 232px;
  column-gap: 6px;
  align-items: center;
  color: ${(p) => (p.$off ? "#a0a0a0" : "#111")};
  & + & { margin-top: ${(p) => p.$gap}px; }
  label { text-align: right; }
`;
const ReadOnly = styled.input`
  width: 100%;
  height: 24px;
  padding: 0 2px;
  border: 1px solid;
  border-color: #a0a0a0 #fff #fff #a0a0a0;
  background: #f0f0f0;
`;
const RadioRow = styled.div`
  display: flex;
  gap: 32px;
  padding-left: 46px;
`;
const RadioLabel = styled.label`
  display: flex;
  align-items: center;
  gap: 8px;
`;
const Radio = styled.input`
  appearance: none;
  width: 14px;
  height: 14px;
  border: 1px solid;
  border-color: #777 #fff #fff #777;
  border-radius: 50%;
  background: #fff;
  &:checked { background: radial-gradient(circle, #000 0 2px, #fff 3px); }
`;
const Actions = styled.div`
  width: 83px;
  display: flex;
  flex-direction: column;
  gap: 1px;
`;
const ActionButton = styled.button`
  height: 25px;
  margin-top: ${(p) => (p.$apart ? 7 : 0)}px;
  padding: 0;
  border: 0;
  background: #f0f0f0;
  box-shadow: inset 1px 1px #fff, inset -1px -1px #5a5a5a, inset -2px -2px #a8a8a8;
`;

/* ---------- bottom ---------- */

const StatusBar = styled.footer`
  flex: 0 0 33px;
  display: flex;
  gap: 4px;
  padding: 3px 0 0;
  border-top: 1px solid #fff;
  background: #f0f0f0;
  font-size: 16px;
  line-height: 26px;
  white-space: pre;
`;
const Pane = styled.div`
  width: ${(p) => p.$w}px;
  padding-left: 1px;
  overflow: hidden;
  border-top: 1px solid #a0a0a0;
  border-left: 1px solid #b8b8b8;
  border-right: 1px solid #fff;
`;
const StatusButton = styled.button`
  width: 21px;
  height: 20px;
  margin-top: 3px;
  padding: 0;
  border: 0;
  display: grid;
  place-items: center;
  background: #c0c0c0;
  ${raised}
`;
const TaskBar = styled.div`
  flex: 0 0 10px;
  display: flex;
  overflow: hidden;
  background: #313335;
  color: #fff;
  font-size: 15px;
  line-height: 20px;
`;
const TaskItem = styled.span`
  margin-left: ${(p) => p.$left}px;
  width: ${(p) => p.$w}px;
  background: ${(p) => p.$bg};
`;
const Clock = styled.time`
  margin: 0 5px 0 auto;
  padding: 3px 86px 0 0;
  border-right: 1px solid #777;
`;
const Watermark = styled.div`
  position: absolute;
  right: 50px;
  bottom: 11px;
  font: 60px/80px "Noto Sans CJK SC", sans-serif;
  color: #fff;
  text-shadow: 3px 3px #787878;
`;
const Handle = styled.span`font-size: 56px;`;

const menus = [
  ["", "F", "ile"], ["", "E", "dit"], ["", "M", "ap"], ["", "D", "ataview"], ["", "S", "election"], ["Matri", "x", ""],
  ["", "L", "ayout"], ["", "T", "ools"], ["Pro", "c", "edures"], ["", "N", "etworks/Paths"], ["", "P", "lanning"], ["", "W", "indow"], ["", "H", "elp"],
];
const fileTools = [["newFile", "New"], ["open", "Open"], ["save", "Save"], ["print", "Print"]];
const mapTools = [
  ["table", "New dataview"], ["chart", "Chart"], ["theme", "Color theme"], ["dots", "Dot density theme", true], ["stars", "Scaled symbol theme"],
  ["pies", "Chart theme"], ["chain", "Join"], ["query", "Select by condition"], ["layers", "Layers"], ["legend", "Legend"], ["units", "Units"],
  ["flashlight", "Locate"], ["palette", "Style"], ["tag", "Labels"],
];
const editTools = [["pinMap", "Geocode", true], ["pin", "Pin", true], ["grid", "Grid", true], ["river", "Bands"], ["pieMap", "Overlay"]];
const networkTools = [["globeTable", "Map table"], ["cursorTable", "Select in table"], ["brushTable", "Paint table"], ["checkTable", "Check table"], ["offTable", "Add table", true]];

const Buttons = ({ items, w }) => (
  <ToolGroup $w={w}>
    {items.map(([name, label, off]) => (
      <ToolButton key={name} type="button" aria-label={label} disabled={off}><Glyph name={name} /></ToolButton>
    ))}
  </ToolGroup>
);

export default function App() {
  return (
    <Screen>
      <GlobalStyle />
      <TitleBar>
        <svg width="20" height="20" viewBox="0 0 20 20">
          <path d="M0 0h20v20H0z" fill="#111" />
          <path d="M2 3l7-2 2 6-6 3zM6 6h9v8H6z" fill="#c01020" />
          <path d="M12 2l6-1v7l-4-2zM2 13l5 2-4 4z" fill="#18c8c8" />
          <path d="M12 13l6-2v7h-6zM1 9l3 1v4H1z" fill="#20a020" />
          <path d="M2 16h8v2H2z" fill="#e0d020" />
          <text x="10" y="13" textAnchor="middle" fontFamily="Liberation Sans, sans-serif" fontWeight="700" fontSize="9" fill="#fff">45</text>
        </svg>
        TransCAD
        <Grow />
        <CaptionButton aria-label="Minimize"><svg width="12" height="12"><path d="M0 6.500h12" stroke="#999" /></svg></CaptionButton>
        <CaptionButton aria-label="Restore"><svg width="12" height="12" fill="none" stroke="#999"><path d="M.5 3.500h8v8h-8zM3.500 3V.5h8v8H9" /></svg></CaptionButton>
        <CaptionButton aria-label="Close"><svg width="12" height="12"><path d="M0 0l12 12M12 0L0 12" stroke="#999" /></svg></CaptionButton>
      </TitleBar>
      <MenuBar>
        {menus.map(([a, k, b]) => <MenuLink key={a + k + b} href="#">{a}<u>{k}</u>{b}</MenuLink>)}
      </MenuBar>
      <ToolBar>
        <Buttons items={fileTools} w={142} />
        <ComboWrap><Combo label="Layer" value="line" w="182px" /></ComboWrap>
        <Buttons items={mapTools} w={505} />
        <Buttons items={editTools} w={179} />
        <Buttons items={networkTools} w={179} />
      </ToolBar>

      <Desktop>
        <DesktopScroll>
          <ScrollButton aria-label="Scroll up"><Chevron to="up" /></ScrollButton>
          <Thumb />
          <BottomArrow><ScrollButton aria-label="Scroll down"><Chevron to="down" /></ScrollButton></BottomArrow>
        </DesktopScroll>

        <Child $x={934} $y={186} $w={879} $h={611} $foot={9}>
          <ChildBar $h={37}><Grow /><ChildButtons /></ChildBar>
          <Sheet>
            <Table>
              <thead>
                <tr>{columns.map((c) => <th key={c} scope="col">{c}</th>)}<th aria-label="End" /></tr>
              </thead>
              <tbody>
                {matrix.map((row, i) => (
                  <tr key={i}>{row.map((v, j) => <td key={j}>{v}</td>)}<td /></tr>
                ))}
              </tbody>
            </Table>
            <Track>
              <ScrollButton aria-label="Scroll up" $s={22}><Chevron to="up" /></ScrollButton>
              <Thumb $h={21} />
              <Grow />
              <ScrollButton aria-label="Scroll down" $s={22}><Chevron to="down" /></ScrollButton>
            </Track>
            <Track $row><ScrollButton aria-label="Scroll right"><Chevron to="right" /></ScrollButton></Track>
            <Track>
              <Grip width="12" height="12" fill="#b4b4b4"><path d="M9 1h2v2H9zM5 5h2v2H5zM9 5h2v2H9zM1 9h2v2H1zM5 9h2v2H5zM9 9h2v2H9z" /></Grip>
            </Track>
          </Sheet>
        </Child>

        <Child $x={10} $y={3} $w={985} $h={904} $foot={8}>
          <ChildBar $h={38}>
            <svg width="20" height="18" viewBox="0 0 20 18">
              <path d="M0 0h20v18H0z" fill="#0060e0" />
              <path d="M0 0h20v4H0z" fill="#000090" />
              <path d="M2 6l6-1 1 4-3 3-1 4-2-5zM11 6l6-1 1 5-4 5-1-4z" fill="#30e8e8" />
              <path d="M.5.500h19v17H.5z" fill="none" stroke="#003" />
            </svg>
            Map2 - sanguo
            <Grow />
            <ChildButtons />
          </ChildBar>
          <Canvas><MapDrawing /></Canvas>
        </Child>

        <Dialog onSubmit={(e) => e.preventDefault()}>
          <DialogBar>
            Multiple Shortest Path
            <DialogClose type="button" aria-label="Close"><svg width="13" height="13"><path d="M.5.500l12 12M12.500.500l-12 12" stroke="#000" /></svg></DialogClose>
          </DialogBar>
          <DialogBody>
            <Groups>
              <Group $after={12} $plain $pad="14px 0 6px">
                <Field><label htmlFor="layer">Line Layer</label><ReadOnly id="layer" readOnly value="line" /></Field>
                <Field $gap={8}><label htmlFor="net">Network</label><ReadOnly id="net" readOnly value="C:\U...2 - 副本\road_net1.net" /></Field>
              </Group>
              <Group $after={11} $pad="7px 0 7px">
                <Legend>Settings</Legend>
                <Field><label htmlFor="min">Minimize</label><Combo id="min" value="Length" active /></Field>
                <Field $gap={7}><label htmlFor="from">From</label><Combo id="from" value="All Features" /></Field>
                <Field $gap={7}><label htmlFor="to">To</label><Combo id="to" value="All Features" /></Field>
                <Field $gap={7} $off><label htmlFor="via">Via</label><Combo id="via" value="" off /></Field>
              </Group>
              <Group $pad="9px 0 12px">
                <Legend>Store Results</Legend>
                <RadioRow>
                  <RadioLabel><Radio type="radio" name="store" />Route System</RadioLabel>
                  <RadioLabel><Radio type="radio" name="store" defaultChecked />Matrix File</RadioLabel>
                </RadioRow>
              </Group>
            </Groups>
            <Actions>
              <ActionButton>OK</ActionButton>
              <ActionButton type="button">Cancel</ActionButton>
              <ActionButton type="button" $apart>Network</ActionButton>
              <ActionButton type="button">Skims</ActionButton>
              <ActionButton type="button">Settings</ActionButton>
            </Actions>
          </DialogBody>
        </Dialog>

        <Palette>
          <PaletteBar>
            Tools
            <PaletteClose aria-label="Close tools"><svg width="8" height="8"><path d="M1 1l6 6M7 1L1 7" stroke="#000" strokeWidth="2" /></svg></PaletteClose>
          </PaletteBar>
          <PaletteGrid>
            {tools.map((t, i) =>
              t ? (
                <ToolButton key={i} type="button" aria-label={t[1]} $pressed={t[0] === "hand"} disabled={t[0] === "frame"}><Glyph name={t[0]} /></ToolButton>
              ) : <span key={i} />
            )}
          </PaletteGrid>
        </Palette>
        <Watermark>知乎 <Handle>@Song</Handle></Watermark>
      </Desktop>

      <StatusBar>
        <Pane $w={337}>Map scale: 1 Inch = 40.19903 Miles (1:2,547,012)</Pane>
        <StatusButton aria-label="Previous"><svg width="14" height="12"><path d="M2 8q4-8 7-2l2 2V3M11 8H7" fill="none" stroke="#777" strokeWidth="2" /></svg></StatusButton>
        <StatusButton aria-label="Cancel"><svg width="14" height="14"><path d="M2 2l10 10M12 2L2 12" stroke="#777" strokeWidth="2" /></svg></StatusButton>
        <Pane $w={334} />
        <Pane $w={334}>{"Network: c:\\...   窃篭tc2 - 副本\\road_net1.net"}</Pane>
      </StatusBar>
      <TaskBar>
        <TaskItem $left={60} $w={430} $bg="#f2f2f2" />
        <TaskItem $left={905} $w={139} $bg="#555354" />
        <Clock>18:50</Clock>
      </TaskBar>
    </Screen>
  );
}
